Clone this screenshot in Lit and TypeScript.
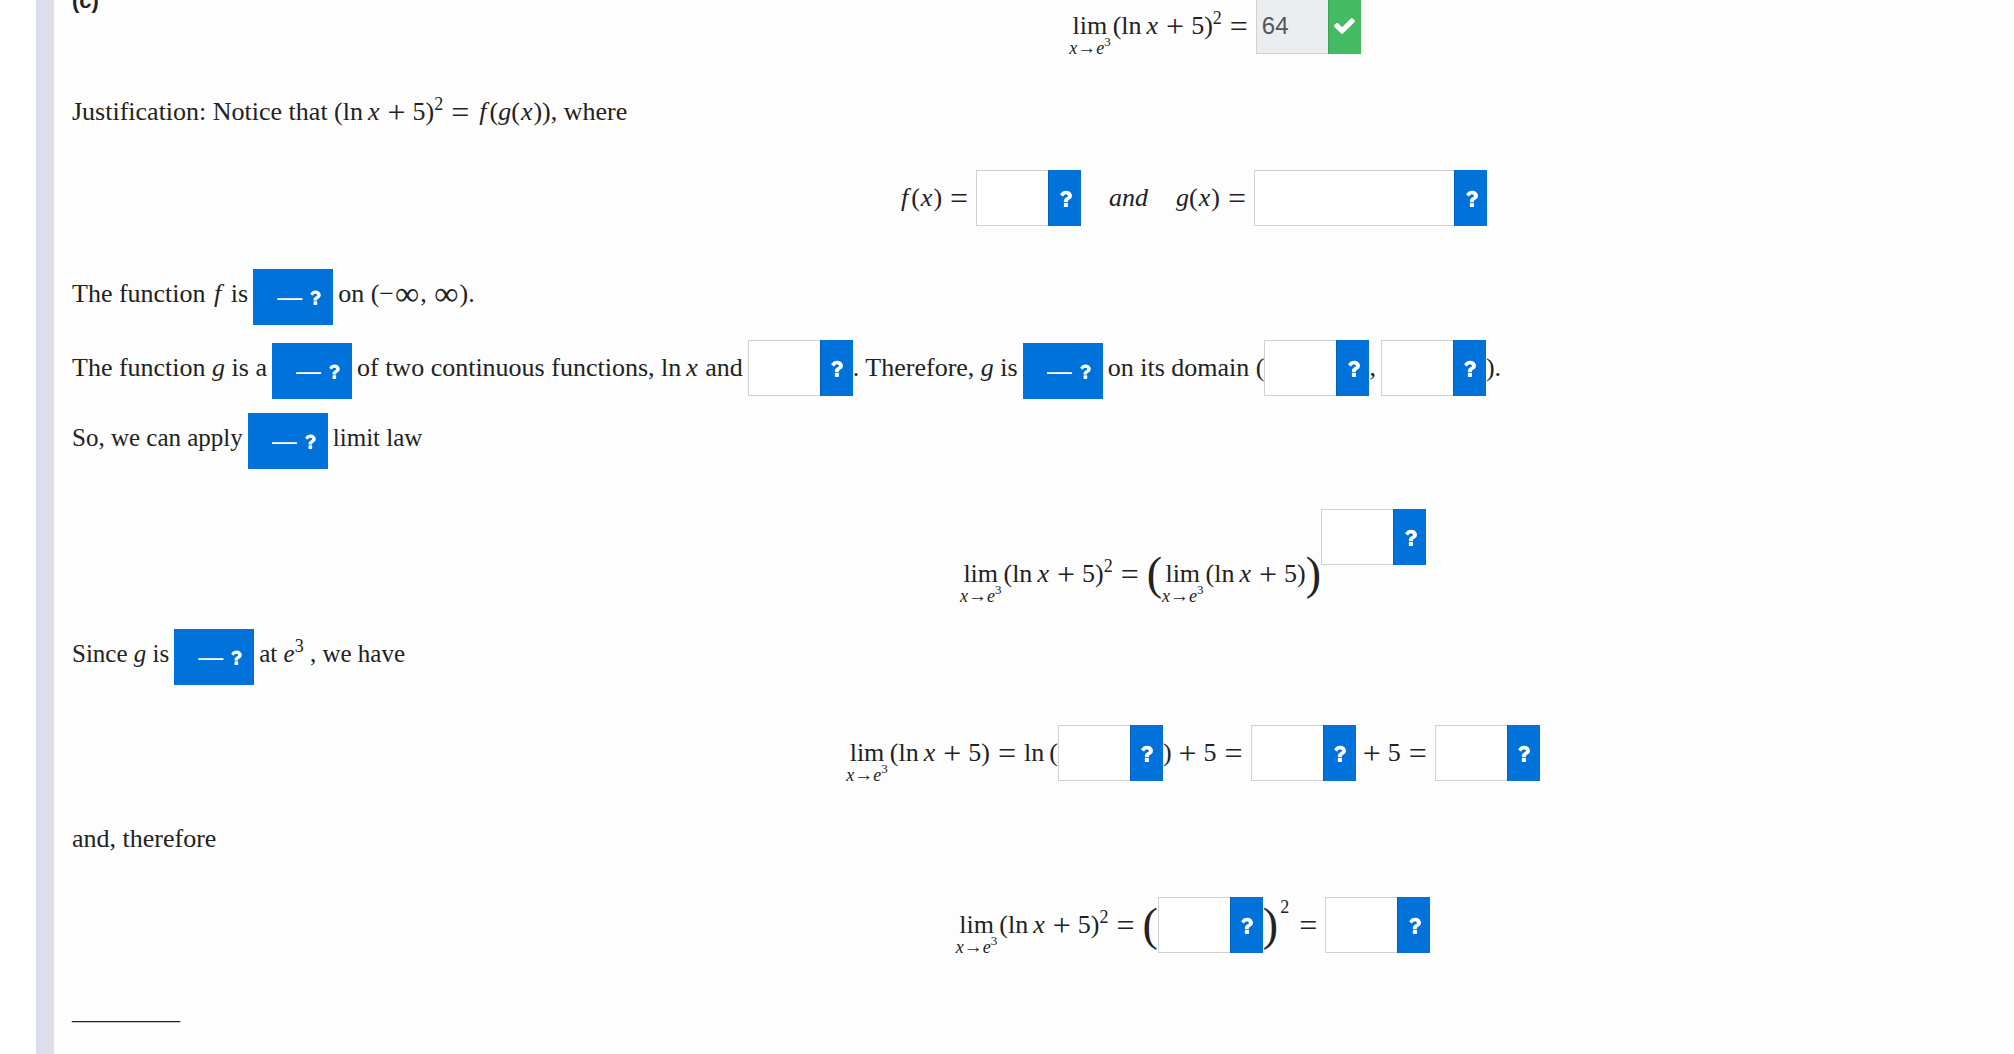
import { LitElement, html, svg, css } from "lit";
import { customElement, property } from "lit/decorators.js";

const questionPath =
  "M704 280v-240q0 -16 -12 -28t-28 -12h-240q-16 0 -28 12t-12 28v240q0 16 12 28t28 12h240q16 0 28 -12t12 -28zM1020 880q0 -54 -15.5 -101t-35 -76.5t-55 -59.5t-57.5 -43.5t-61 -35.5q-41 -23 -68.5 -65t-27.5 -67q0 -17 -12 -32.5t-28 -15.5h-240q-15 0 -25.5 18.5t-10.5 37.5v45q0 83 65 156.5t143 108.5q59 27 84 56t25 76q0 42 -46.5 74t-107.5 32q-65 0 -108 -29q-35 -25 -107 -115q-13 -16 -31 -16q-12 0 -25 8l-164 125q-13 10 -15.5 25t5.5 28q160 266 464 266q80 0 161 -31t146 -83t106 -127.5t41 -158.5z";
const checkPath =
  "M1671 970q0 -40 -28 -68l-724 -724l-136 -136q-28 -28 -68 -28t-68 28l-136 136l-362 362q-28 28 -28 68t28 68l136 136q28 28 68 28t68 -28l294 -295l656 657q28 28 68 28t68 -28l136 -136q28 -28 28 -68z";

const icon = (kind: "question" | "check") =>
  kind === "question"
    ? html`<svg class="question" viewBox="0 0 1024 1408" aria-hidden="true">
        ${svg`<path fill="currentColor" transform="translate(0 1404) scale(1 -1)" d=${questionPath}></path>`}
      </svg>`
    : html`<svg class="check" viewBox="121 0 1550 1188" aria-hidden="true">
        ${svg`<path fill="currentColor" transform="translate(0 1202) scale(1 -1)" d=${checkPath}></path>`}
      </svg>`;

/* A text box joined to its status button. */
@customElement("answer-field")
export class AnswerField extends LitElement {
  @property() label = "";
  @property() value = "";
  @property({ type: Boolean }) correct = false;
  @property({ type: Boolean, reflect: true }) wide = false;

  static styles = css`
    :host {
      display: inline-flex;
      flex: none;
      height: 56px;
    }
    .box {
      box-sizing: border-box;
      width: 72px;
      height: 56px;
      margin: 0;
      padding: 0 5px;
      border: 1px solid #d0d1d3;
      border-right: 0;
      border-radius: 0;
      background: #fff;
      color: #555;
      font: 24px "Liberation Sans", Arial, sans-serif;
      outline-offset: -2px;
    }
    :host([wide]) .box {
      width: 200px;
    }
    .box:disabled {
      background: #ecedf0;
    }
    .status {
      display: flex;
      align-items: center;
      justify-content: center;
      box-sizing: border-box;
      width: 33px;
      height: 56px;
      margin: 0;
      padding: 0;
      border: 0;
      border-left: 1px solid #0062bd;
      background: #0072d9;
      color: #fff;
    }
    .status.ok {
      border-left-color: #38a354;
      background: #44bb62;
    }
    .question {
      width: 13px;
      height: 18px;
    }
    .check {
      width: 21px;
      height: 16px;
    }
  `;

  render() {
    return html`<input
        class="box"
        type="text"
        aria-label=${this.label}
        .value=${this.value}
        ?disabled=${this.correct}
      /><button
        class="status ${this.correct ? "ok" : ""}"
        type="button"
        aria-label=${this.correct ? "Correct" : "Not answered"}
      >
        ${icon(this.correct ? "check" : "question")}
      </button>`;
  }
}

/* A drop-down that is still unanswered. */
@customElement("answer-choice")
export class AnswerChoice extends LitElement {
  @property() label = "";

  static styles = css`
    :host {
      display: inline-grid;
      flex: none;
      align-items: center;
      margin: 6px 5px 0;
    }
    .choice,
    .question {
      grid-area: 1 / 1;
    }
    .choice {
      appearance: none;
      box-sizing: border-box;
      width: 80px;
      height: 56px;
      margin: 0;
      padding: 0 0 0 24px;
      border: 0;
      border-radius: 0;
      background: #0072d9;
      color: #fff;
      font: 25px "Liberation Sans", Arial, sans-serif;
    }
    .question {
      justify-self: end;
      width: 12px;
      height: 16px;
      margin-right: 12px;
      color: #fff;
      pointer-events: none;
    }
  `;

  render() {
    return html`<select class="choice" aria-label=${this.label}>
        <option>—</option>
      </select>
      ${icon("question")}`;
  }
}

const limit = () => html`<span class="limit"
  ><span>lim</span
  ><span class="under"><i>x</i><span class="arrow">→</span><i>e</i><span class="tiny">3</span></span></span
>`;
const f = html`<i class="f">f</i>`;
const x = html`<i class="x">x</i>`;
const plusFive = html`<span class="op">+</span><span>5</span>`;
const lnX = html`<span>ln</span><i class="thin x">x</i>`;
const lnPlus = html`<span>(</span>${lnX}${plusFive}<span>)</span>`;
const squared = html`<span class="sup">2</span>`;
const equals = html`<span class="rel">=</span>`;

@customElement("app-root")
export class AppRoot extends LitElement {
  static styles = css`
    :host {
      display: flex;
      min-height: 100vh;
      overflow: hidden;
      background: #fff;
      color: #222;
      font: 26px/28px "Liberation Serif", "Times New Roman", serif;
    }
    .bar {
      flex: none;
      width: 18px;
      margin-left: 36px;
      background: #dddeeb;
    }
    .content {
      flex: 1;
      min-width: 0;
      padding-left: 18px;
      background: #fdfdfd;
    }
    .part {
      margin: -9px 0 -13px;
      font: bold 22px/20px "Liberation Sans", Arial, sans-serif;
    }
    .line {
      display: flex;
      align-items: center;
      height: 56px;
      margin: 0;
      white-space: pre;
    }
    .equation {
      justify-content: center;
      padding-left: 300px;
    }
    .first {
      padding-left: 344px;
    }
    .note {
      font-size: 25px;
    }
    .gap-s {
      margin-top: 14px;
    }
    .gap-m {
      margin-top: 18px;
    }
    .gap-l {
      margin-top: 30px;
    }
    .gap-xl {
      margin-top: 40px;
    }
    .gap-xxl {
      margin-top: 43px;
    }
    .gap-limit {
      margin-top: 80px;
    }
    .gap-after {
      margin-top: 24px;
    }
    .op,
    .rel {
      font-size: 32px;
    }
    .infinity {
      margin: 0 1px;
      font-size: 34px;
    }
    .op {
      margin: 0 7px;
    }
    .rel {
      margin: 0 8px;
    }
    .x {
      margin: 0 1px;
    }
    .thin {
      margin-left: 5px;
    }
    .f {
      margin: 0 3px 0 2px;
    }
    .quad {
      margin: 0 28px;
    }
    .limit {
      display: inline-flex;
      flex-direction: column;
      align-items: center;
      margin-right: 2px;
    }
    .under {
      display: flex;
      align-items: center;
      height: 16px;
      margin-bottom: -16px;
      font-size: 18px;
      line-height: 16px;
    }
    .arrow {
      font-size: 19px;
    }
    .tiny {
      margin-bottom: 12px;
      font-size: 13px;
    }
    .sup {
      margin-bottom: 16px;
      font-size: 18px;
    }
    .high {
      margin: 0 2px 36px;
      font-size: 18px;
    }
    .power {
      margin-bottom: 74px;
    }
    .big {
      font-size: 46px;
      line-height: 46px;
    }
    .blank {
      font-size: 24px;
    }
  `;

  render() {
    return html`
      <div class="bar"></div>
      <main class="content">
        <h2 class="part">(c)</h2>
        <div class="line equation first">
          ${limit()}${lnPlus}${squared}${equals}<answer-field
            label="Value of the limit"
            value="64"
            correct
          ></answer-field>
        </div>
        <p class="line gap-l"><span>Justification: Notice that </span>${lnPlus}${squared}${equals}${f}<span>(</span><i>g</i><span>(</span>${x}<span>)),</span><span> where</span></p>
        <div class="line equation gap-l">
          ${f}<span>(</span>${x}<span>)</span>${equals}<answer-field label="f(x)"></answer-field
          ><i class="quad">and</i
          ><i>g</i><span>(</span>${x}<span>)</span>${equals}<answer-field label="g(x)" wide></answer-field>
        </div>
        <p class="line gap-xl"><span>The function </span>${f}<span> is</span><answer-choice label="The function f is"></answer-choice><span>on (−</span><span class="infinity">∞</span><span>, </span><span class="infinity">∞</span><span>).</span></p>
        <p class="line gap-m"><span>The function </span><i>g</i><span> is a</span><answer-choice label="The function g is a"></answer-choice><span>of two continuous functions, </span>${lnX}<span> and</span><answer-field class="thin" label="Second continuous function"></answer-field><span>. Therefore, </span><i>g</i><span> is</span><answer-choice label="Therefore, g is"></answer-choice><span>on its domain (</span><answer-field label="Start of domain"></answer-field><span>,</span><answer-field class="thin" label="End of domain"></answer-field><span>).</span></p>
        <p class="line note gap-s"><span>So, we can apply</span><answer-choice label="Limit law"></answer-choice><span>limit law</span></p>
        <div class="line equation gap-limit">
          ${limit()}${lnPlus}${squared}${equals}<span class="big">(</span>${limit()}${lnPlus}<span class="big">)</span
          ><answer-field class="power" label="Exponent"></answer-field>
        </div>
        <p class="line note gap-after"><span>Since </span><i>g</i><span> is</span><answer-choice label="Since g is"></answer-choice><span>at </span><i>e</i><span class="sup">3</span><span> , we have</span></p>
        <div class="line equation gap-xxl">
          ${limit()}${lnPlus}${equals}<span>ln</span><span class="thin">(</span
          ><answer-field label="Argument of ln"></answer-field
          ><span>)</span>${plusFive}${equals}<answer-field label="Value of ln"></answer-field
          >${plusFive}${equals}<answer-field label="Limit of ln x + 5"></answer-field>
        </div>
        <p class="line gap-l"><span>and, therefore</span></p>
        <div class="line equation gap-l">
          ${limit()}${lnPlus}${squared}${equals}<span class="big">(</span
          ><answer-field label="Base of the square"></answer-field
          ><span class="big">)</span><span class="high">2</span>${equals}<answer-field
            label="Final value"
          ></answer-field>
        </div>
        <p class="line gap-l blank">_________</p>
      </main>
    `;
  }
}
